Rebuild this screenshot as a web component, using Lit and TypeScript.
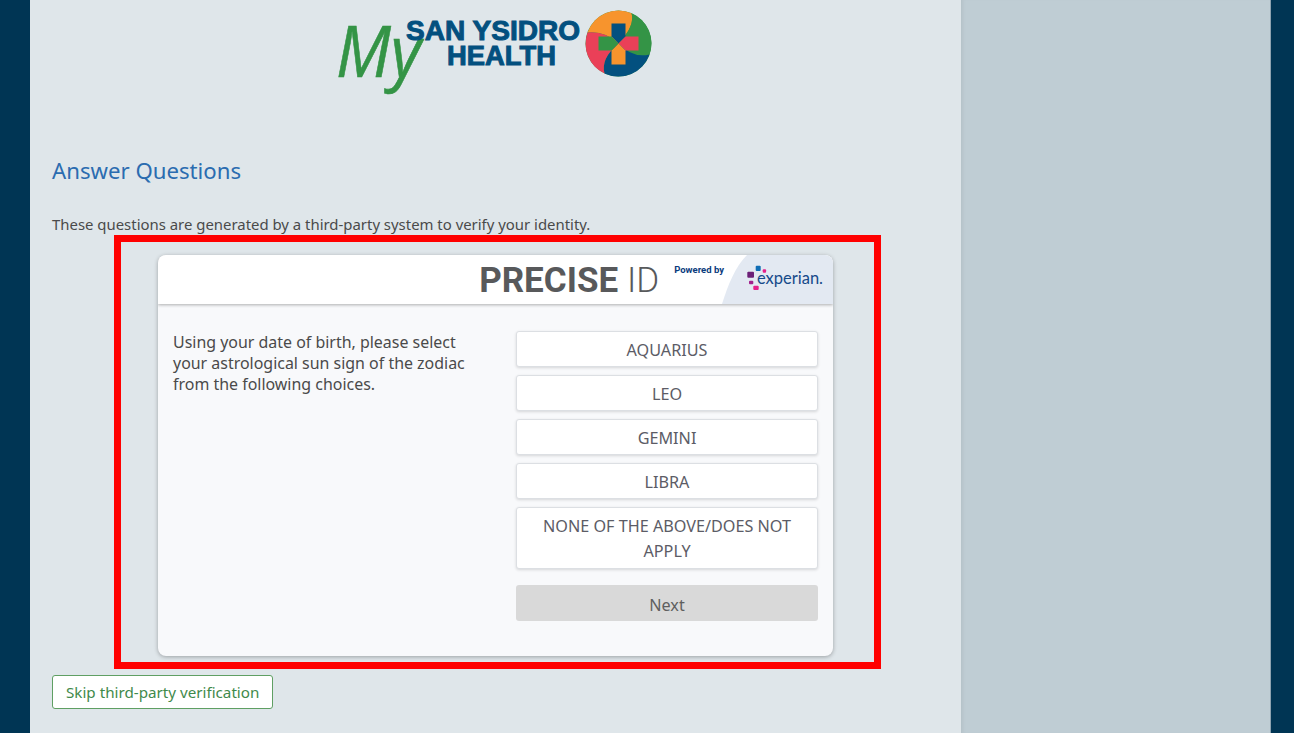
import { LitElement, html, css, svg } from "lit";
import { customElement } from "lit/decorators.js";

const OPTIONS = ["AQUARIUS", "LEO", "GEMINI", "LIBRA", "NONE OF THE ABOVE/DOES NOT APPLY"];

@customElement("app-root")
export class AppRoot extends LitElement {
  static styles = css`
    :host { display: block; height: 733px; overflow: hidden; background: #003554; font-family: "Noto Sans", sans-serif; color: #4a4a4a; }
    .page { display: grid; grid-template-columns: 931px 310px; margin: 0 23px 0 30px; height: 733px; }
    .main { background: #dfe6ea; padding: 0 22px; display: flex; flex-direction: column; min-width: 0; }
    .side { background: #bfcdd4; box-shadow: inset 4px 0 4px -3px rgba(0,0,0,.08); border-right: 1px solid #8da3b1; }
    .logo { display: block; margin: 0 0 0 284px; flex: none; }
    h1 { margin: 56px 0 0; font-size: 22.2px; line-height: 30px; font-weight: 400; color: #2b6cb0; }
    .intro { margin: 28px 0 0; font-size: 14.92px; line-height: 20px; color: #4a4a4a; }
    .frame { margin: 1px 0 0 62px; width: 767px; height: 434px; box-sizing: border-box; border: 7px solid #ff0000; padding: 13px 41px 0 37px; }
    .card { width: 675px; height: 401px; background: #f8f9fb; border-radius: 8px; box-shadow: 0 1px 4px rgba(0,0,0,.3); overflow: hidden; display: flex; flex-direction: column; }
    .head { height: 49px; flex: none; background: #fff; box-shadow: 0 1px 3px rgba(0,0,0,.3); display: flex; justify-content: flex-end; align-items: stretch; position: relative; }
    .title { font-family: "Roboto", sans-serif; font-size: 35px; line-height: 49px; color: #58595b; font-weight: 700; white-space: nowrap; margin-top: 1px; }
    .title span { font-weight: 300; }
    .powered { font-family: "Roboto", sans-serif; font-weight: 700; font-size: 9.5px; line-height: 12px; color: #0b3c7d; margin: 9px 0 0 15px; white-space: nowrap; }
    .panel { display: block; margin-left: -2px; flex: none; }
    .body { flex: 1; display: grid; grid-template-columns: 300px 302px; column-gap: 43px; padding: 27px 15px 0; }
    .question { margin: 1px 0 0; font-size: 15.95px; line-height: 21px; color: #4a4a4a; }
    .opts { display: flex; flex-direction: column; gap: 8px; }
    button { font-family: "Noto Sans", sans-serif; font-size: 16.2px; line-height: 25.5px; color: #5c5c66; margin: 0; }
    .opt { width: 302px; padding: 5.75px 20px 2.75px; background: #fff; border: 1px solid #dcdfe3; border-radius: 3px; box-shadow: 0 1px 3px rgba(0,0,0,.14); }
    .next { width: 302px; height: 36px; padding: 7px 20px 1px; margin-top: 8px; background: #d9d9d9; border: 0; border-radius: 3px; color: #5f5f5f; }
    .skip { align-self: flex-start; margin-top: 6px; height: 34px; padding: 0 13px; background: #fff; border: 1px solid #5f9f63; border-radius: 3px; font-size: 15.2px; line-height: 32px; color: #3f8a4b; }
  `;

  logo() {
    return svg`
      <text x="0" y="77" font-family="Open Sans" font-style="italic" font-size="71" fill="#349446" stroke="#349446" stroke-width=".6" textLength="85" lengthAdjust="spacingAndGlyphs">My</text>
      <text x="70" y="40" font-family="Liberation Sans" font-weight="700" font-size="28" fill="#03507f" stroke="#03507f" stroke-width="1" textLength="174" lengthAdjust="spacingAndGlyphs">SAN YSIDRO</text>
      <text x="111" y="65" font-family="Liberation Sans" font-weight="700" font-size="28" fill="#03507f" stroke="#03507f" stroke-width="1" textLength="109" lengthAdjust="spacingAndGlyphs">HEALTH</text>
      <g transform="translate(282.5 43.5)">
        <circle r="33" fill="#349446"/>
        <path d="M-31,-11 A33,33 0 0 1 13,-30.3 Q17,-18 0,0 Q-14,-13 -31,-11Z" fill="#f7942d"/>
        <path d="M13,-30.3 A33,33 0 0 1 31,11 Q14,15 0,0 Q17,-18 13,-30.3Z" fill="#349446"/>
        <path d="M31,11 A33,33 0 0 1 -14,30 Q-18,15 0,0 Q14,15 31,11Z" fill="#03507f"/>
        <path d="M-14,30 A33,33 0 0 1 -31,-11 Q-14,-13 0,0 Q-18,15 -14,30Z" fill="#ea4058"/>
        <path d="M-7,-20 H7 V-7 L0,0 L-7,-7Z" fill="#03507f"/>
        <path d="M20,-7 V7 H7 L0,0 L7,-7Z" fill="#ea4058"/>
        <path d="M7,21 H-7 V7 L0,0 L7,7Z" fill="#f7942d"/>
        <path d="M-20,7 V-7 H-7 L0,0 L-7,7Z" fill="#349446"/>
      </g>`;
  }

  panel() {
    return svg`
      <path d="M0,49 C6,30 13,12 25,0 H111 V49Z" fill="#e3e9f2"/>
      <rect x="33.7" y="10.7" width="5" height="5.3" rx="1" fill="#0f6db5"/>
      <rect x="40.7" y="14.3" width="3.4" height="3.4" rx="1" fill="#e5218b"/>
      <rect x="25.3" y="16.7" width="6.7" height="6" rx="1" fill="#6c2077"/>
      <rect x="27" y="25.7" width="4.3" height="3.6" rx="1" fill="#a3238e"/>
      <rect x="31.3" y="30.7" width="5.4" height="4.3" rx="1" fill="#e5218b"/>
      <text x="35" y="29" font-family="Lato" font-size="17.5" fill="#164a8a" textLength="66" lengthAdjust="spacingAndGlyphs">experian.</text>`;
  }

  render() {
    return html`
      <div class="page">
        <main class="main">
          <svg class="logo" width="330" height="100" viewBox="0 0 330 100" role="img" aria-label="My San Ysidro Health">${this.logo()}</svg>
          <h1>Answer Questions</h1>
          <p class="intro">These questions are generated by a third-party system to verify your identity.</p>
          <section class="frame">
            <div class="card">
              <header class="head">
                <div class="title">PRECISE <span>ID</span></div>
                <div class="powered">Powered by</div>
                <svg class="panel" width="111" height="49" viewBox="0 0 111 49">${this.panel()}</svg>
              </header>
              <div class="body">
                <p class="question">Using your date of birth, please select your astrological sun sign of the zodiac from the following choices.</p>
                <div class="opts">
                  ${OPTIONS.map((o) => html`<button class="opt">${o}</button>`)}
                  <button class="next">Next</button>
                </div>
              </div>
            </div>
          </section>
          <button class="skip">Skip third-party verification</button>
        </main>
        <aside class="side"></aside>
      </div>
    `;
  }
}
